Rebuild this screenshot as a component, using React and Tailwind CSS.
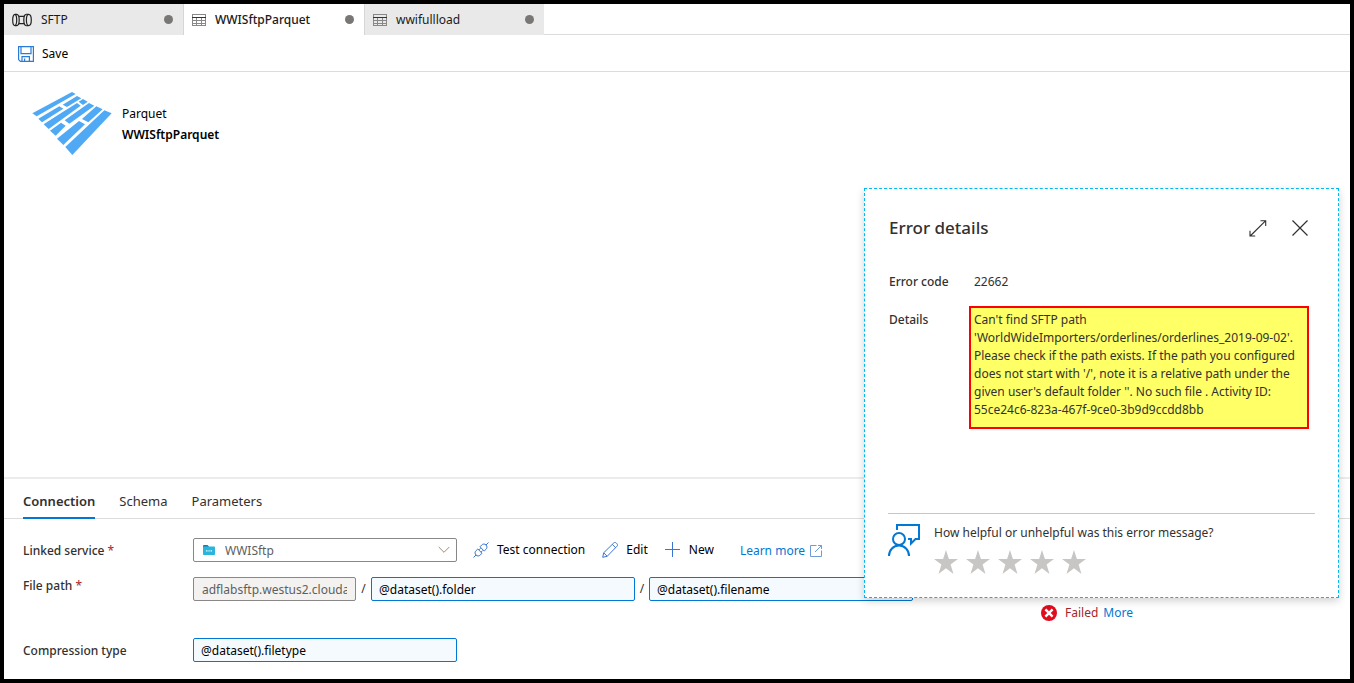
const tabs = [
  { name: "SFTP", kind: "sftp", style: "border-r border-[#d6d6d6] bg-[#e9e9e9]" },
  { name: "WWISftpParquet", kind: "table", style: "bg-white font-medium" },
  { name: "wwifullload", kind: "table", style: "border-l border-[#d6d6d6] bg-[#e9e9e9]" },
];

const panelTabs = ["Connection", "Schema", "Parameters"];

const message =
  "Can't find SFTP path 'WorldWideImporters/orderlines/orderlines_2019-09-02'. Please check if the path exists. If the path you configured does not start with '/', note it is a relative path under the given user's default folder ''. No such file . Activity ID: 55ce24c6-823a-467f-9ce0-3b9d9ccdd8bb";

const blueInput = "h-6 w-[264px] rounded-[2px] border border-[#0078d4] bg-[#f5faff] px-[7px] text-black outline-none";

// ── Icons ────────────────────────────────────────────────────────────
function SftpIcon() {
  return (
    <svg width="20" height="14" viewBox="0 0 20 14" fill="none" stroke="#222" strokeWidth="1.2">
      <path d="M3 1.400c-1.500 0-2.300 2.400-2.300 5.600s.8 5.600 2.300 5.600M3 1.400h1.600c1.800 0 2.600 2.400 2.600 5.600s-.8 5.600-2.600 5.600H3" />
      <path d="M3 1.400c1.200.6 1.700 2.700 1.700 5.600S4.200 12 3 12.600" />
      <path d="M7 3.400h5.400M7 10.600h5.400" />
      <path d="M14.300 1.400c-1.800 0-2.500 2.400-2.500 5.600s.7 5.600 2.500 5.600" />
      <path d="M14.300 1.400h2.200c2 0 2.800 2.400 2.800 5.600s-.8 5.600-2.800 5.600h-2.200M16.200 1.400c-1.300.6-1.800 2.700-1.800 5.600s.5 5 1.800 5.600" />
    </svg>
  );
}

function TableIcon() {
  return (
    <svg width="14" height="12" viewBox="0 0 14 12" fill="none" stroke="#888" shapeRendering="crispEdges">
      <path d="M.5.5h13v11H.5zM1 6.500h12M1 9.500h12M4.500 4v7M9.500 4v7" />
      <path d="M0 3.500h14" stroke="#333" />
    </svg>
  );
}

function SaveIcon() {
  return (
    <svg width="16" height="16" viewBox="0 0 16 16" fill="none" stroke="#2b7bd8" strokeWidth="1.2">
      <path d="M.6.6h14.800v14.800H2.400L.6 13.600zM3 .6v7h10v-7M4 15.400v-4.800h7.400v4.800M6.600 12.400v3" />
    </svg>
  );
}

function ParquetLogo() {
  return (
    <svg width="80" height="63" viewBox="6 6 240 189" fill="#50a9f4">
      <path d="M7 70 126 6l11 6L20 79z" />
      <path d="M25 86 88 49l12 7-64 41zM98 44l43-26 13 7-43 26z" />
      <path d="M41 103 98 66l23-14 1-1 19-12 11 8-96 70zM146 35l13-8 14 8-14 10z" />
      <path d="m60 122 33-24 14 9-30 30zM104 91l73-52 16 8-75 54z" />
      <path d="m81 146 66-53 18 10-65 62zM156 87l43-38 19 9-43 39z" />
      <path d="M106 171 223 61l22 9-118 125z" />
    </svg>
  );
}

function FolderIcon() {
  return (
    <svg className="pointer-events-none absolute left-2.5 top-[7px]" width="12" height="10" viewBox="0 0 12 10">
      <path d="M0 1a1 1 0 0 1 1-1h3.500l1.500 1.500V5H0z" fill="#0f7fb8" />
      <rect y="1.500" width="12" height="8.500" rx=".8" fill="#2bb5dc" />
      <path d="M3 5.800h1.500M5.400 5.800h1.200M7.500 5.800H9" stroke="#e6faff" strokeWidth="1.3" />
    </svg>
  );
}

function ChevronIcon() {
  return (
    <svg className="pointer-events-none absolute right-[7px] top-2" width="12" height="8" viewBox="0 0 12 8" fill="none" stroke="#9a8a78">
      <path d="m.7 1 5.300 5.300L11.300 1" />
    </svg>
  );
}

function PlugIcon() {
  return (
    <svg width="16" height="16" viewBox="0 0 16 16" fill="none" stroke="#3a76cf">
      <path d="M.5 15.500 3 13M13 3 15.500.5" />
      <path d="M3 13c-1.300-1.300-1.300-3 0-4.300L4.800 7 9 11.200 7.300 13c-1.300 1.300-3 1.300-4.300 0z" />
      <path d="M13 3c1.300 1.300 1.300 3 0 4.300L11.200 9 7 4.800 8.700 3c1.300-1.300 3-1.300 4.300 0z" />
      <path d="M5.800 8 7.600 6.200M8 10.200l1.800-1.800" />
    </svg>
  );
}

function PencilIcon() {
  return (
    <svg width="16" height="16" viewBox="0 0 16 16" fill="none" stroke="#3a76cf">
      <path d="m.7 15.300 1-4.500L11.800.9c.8-.7 1.800-.5 2.500.2l.6.6c.7.7.9 1.700.1 2.500L5.200 14.300zM10.300 2.400l3.400 3.400M1.700 10.800l3.500 3.500" />
    </svg>
  );
}

function PlusIcon() {
  return (
    <svg width="16" height="16" viewBox="0 0 16 16" fill="none" stroke="#3a76cf">
      <path d="M7.500 0v15M0 7.500h15" />
    </svg>
  );
}

function ExternalIcon() {
  return (
    <svg width="12" height="12" viewBox="0 0 12 12" fill="none" stroke="#6f9bdc">
      <path d="M6.500.5h-6v11h11v-6M5 7l6.500-6.500M8 .5h3.500V4" />
    </svg>
  );
}

function FailedIcon() {
  return (
    <svg width="16" height="16" viewBox="0 0 16 16">
      <circle cx="8" cy="8" r="8" fill="#e00b1c" />
      <path d="m4.400 4.400 7.200 7.200M11.600 4.400l-7.200 7.200" stroke="#fff" strokeWidth="2.4" />
    </svg>
  );
}

function ExpandIcon() {
  return (
    <svg width="18" height="17" viewBox="0 0 18 17" fill="none" stroke="#323130" strokeWidth="1.1">
      <path d="M1.200 16 16.500.9M11.500.7h5.200v5.200M1 10.800V16h5.200" />
    </svg>
  );
}

function CloseIcon() {
  return (
    <svg width="16" height="16" viewBox="0 0 16 16" fill="none" stroke="#323130" strokeWidth="1.2">
      <path d="m.5.5 15 15M15.500.5l-15 15" />
    </svg>
  );
}

function FeedbackIcon() {
  return (
    <svg className="shrink-0" width="32" height="32" viewBox="0 0 32 32" fill="none" stroke="#0078d4" strokeWidth="2">
      <path d="M9 6V1h22v14h-3.500L23 19.500V15h-3" />
      <circle cx="11" cy="15" r="6" />
      <path d="M1 32c0-6 4.500-10.500 10-10.500S21 26 21 32" />
    </svg>
  );
}

function StarIcon() {
  return (
    <svg width="24" height="24" viewBox="0 0 24 24" fill="#c8c6c4">
      <path d="m12 0 2.900 9H24l-7.400 5.600 2.900 9.400L12 18.300 4.500 24l2.900-9.400L0 9h9.100z" />
    </svg>
  );
}

// ── Error popup ──────────────────────────────────────────────────────
function ErrorDetails() {
  return (
    <section className="absolute bottom-[81px] right-[11px] flex min-h-[410px] w-[475px] flex-col border border-dashed border-[#00b7f0] bg-white shadow-[0_3px_8px_rgba(0,0,0,0.18)]">
      <div className="flex items-center pl-6 pr-[30px] pt-[27px]">
        <h2 className="text-[17px] font-medium leading-6">Error details</h2>
        <button aria-label="Expand" className="ml-auto"><ExpandIcon /></button>
        <button aria-label="Close" className="ml-[25px]"><CloseIcon /></button>
      </div>
      <dl className="mt-[33px] grid grid-cols-[80px_1fr] gap-y-[15px] pl-6 pr-[29px]">
        <dt className="font-medium">Error code</dt>
        <dd className="pl-[5px]">22662</dd>
        <dt className="pt-[5px] font-medium">Details</dt>
        <dd className="border-2 border-[#f00] bg-[#ffff66] pb-2 pl-[3px] pt-[3px]">{message}</dd>
      </dl>
      <div className="mx-[23px] mt-auto flex gap-[14px] border-t border-[#c8c6c4] pb-[23px] pt-[10px]">
        <FeedbackIcon />
        <div>
          <p>How helpful or unhelpful was this error message?</p>
          <div className="mt-2 flex gap-2">
            {[1, 2, 3, 4, 5].map((n) => (
              <button key={n} aria-label={`Rate ${n}`}><StarIcon /></button>
            ))}
          </div>
        </div>
      </div>
    </section>
  );
}

export default function App() {
  return (
    <div className="relative flex min-h-screen flex-col border-4 border-black bg-white font-['Noto_Sans',sans-serif] text-[12px] leading-[18px] text-[#323130]">
      <div className="flex h-[31px] text-[#1b1a19]">
        {tabs.map((t) => (
          <button key={t.name} className={`flex w-[180px] items-center gap-[9px] pl-2 pr-[10px] ${t.style}`}>
            {t.kind === "sftp" ? <SftpIcon /> : <TableIcon />}
            {t.name}
            <span className="ml-auto h-[9px] w-[9px] rounded-full bg-[#797775]" />
          </button>
        ))}
        <div className="flex-1 border-b border-[#dcdcdc]" />
      </div>

      <div className="flex h-[37px] items-center border-b border-[#dcdcdc] pl-[14px] pt-[2px] text-black">
        <button className="flex items-center gap-2"><SaveIcon />Save</button>
      </div>

      <div className="flex flex-1 items-start pb-6 pl-7 pt-5">
        <div className="flex items-center gap-[10px] leading-[21px] text-black">
          <ParquetLogo />
          <div>
            <div>Parquet</div>
            <div className="font-semibold">WWISftpParquet</div>
          </div>
        </div>
      </div>

      <div className="border-t-2 border-[#ececec]">
        <div className="flex h-10 gap-6 border-b border-[#dcdcdc] pl-[19px] text-[13px]">
          {panelTabs.map((name, i) => (
            <button
              key={name}
              className={`-mb-px border-b-2 pt-[5px] ${i === 0 ? "border-[#0078d4] font-semibold" : "border-transparent"}`}
            >
              {name}
            </button>
          ))}
        </div>

        <form className="pb-[17px] pl-[19px] pt-[19px]">
          <div className="flex items-center">
            <label htmlFor="service" className="w-[170px] pt-[2px] font-medium">
              Linked service <span className="font-normal text-[#a4262c]">*</span>
            </label>
            <div className="relative">
              <select id="service" className="block h-6 w-[264px] appearance-none rounded-[2px] border border-[#8a8886] bg-white pl-[31px] pt-[2px] text-[#605e5c]">
                <option>WWISftp</option>
              </select>
              <FolderIcon />
              <ChevronIcon />
            </div>
            <div className="flex items-center gap-[17px] pl-4 text-black">
              <button type="button" className="flex items-center gap-2"><PlugIcon />Test connection</button>
              <button type="button" className="flex items-center gap-2"><PencilIcon />Edit</button>
              <button type="button" className="flex items-center gap-2"><PlusIcon />New</button>
            </div>
            <a href="#learn" className="ml-[26px] flex items-center gap-[5px] pt-[2px] text-[#0078d4]">Learn more <ExternalIcon /></a>
          </div>

          <div className="mt-[15px] flex items-start">
            <label htmlFor="host" className="w-[170px] font-medium">
              File path <span className="font-normal text-[#a4262c]">*</span>
            </label>
            <input
              id="host"
              disabled
              defaultValue="adflabsftp.westus2.cloudapp.azure.com"
              className="h-6 w-[163px] rounded-[2px] border border-[#8a8886] bg-[#f3f2f1] px-2 text-[#605e5c]"
            />
            <span className="w-[15px] text-center leading-6">/</span>
            <input aria-label="Folder" defaultValue="@dataset().folder" className={blueInput} />
            <span className="w-[14px] text-center leading-6">/</span>
            <input aria-label="File name" defaultValue="@dataset().filename" className={blueInput} />
          </div>

          <div className="mt-[3px] flex items-center justify-end pr-[217px]">
            <FailedIcon />
            <span className="pl-2 text-[#a4262c]">Failed</span>
            <a href="#more" className="pl-[5px] text-[#0078d4]">More</a>
          </div>

          <div className="mt-4 flex items-center">
            <label htmlFor="compression" className="w-[170px] pt-[2px] font-medium">Compression type</label>
            <input id="compression" defaultValue="@dataset().filetype" className={blueInput} />
          </div>
        </form>
      </div>

      <ErrorDetails />
    </div>
  );
}
